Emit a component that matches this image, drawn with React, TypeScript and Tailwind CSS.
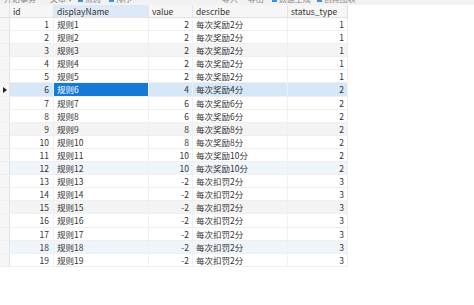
import React from "react";

type Row = { id: number; name: string; value: number; desc: string; st: number };

const rows: Row[] = [
  { id: 1, name: "规则1", value: 2, desc: "每次奖励2分", st: 1 },
  { id: 2, name: "规则2", value: 2, desc: "每次奖励2分", st: 1 },
  { id: 3, name: "规则3", value: 2, desc: "每次奖励2分", st: 1 },
  { id: 4, name: "规则4", value: 2, desc: "每次奖励2分", st: 1 },
  { id: 5, name: "规则5", value: 2, desc: "每次奖励2分", st: 1 },
  { id: 6, name: "规则6", value: 4, desc: "每次奖励4分", st: 2 },
  { id: 7, name: "规则7", value: 6, desc: "每次奖励6分", st: 2 },
  { id: 8, name: "规则8", value: 6, desc: "每次奖励6分", st: 2 },
  { id: 9, name: "规则9", value: 8, desc: "每次奖励8分", st: 2 },
  { id: 10, name: "规则10", value: 8, desc: "每次奖励8分", st: 2 },
  { id: 11, name: "规则11", value: 10, desc: "每次奖励10分", st: 2 },
  { id: 12, name: "规则12", value: 10, desc: "每次奖励10分", st: 2 },
  { id: 13, name: "规则13", value: -2, desc: "每次扣罚2分", st: 3 },
  { id: 14, name: "规则14", value: -2, desc: "每次扣罚2分", st: 3 },
  { id: 15, name: "规则15", value: -2, desc: "每次扣罚2分", st: 3 },
  { id: 16, name: "规则16", value: -2, desc: "每次扣罚2分", st: 3 },
  { id: 17, name: "规则17", value: -2, desc: "每次扣罚2分", st: 3 },
  { id: 18, name: "规则18", value: -2, desc: "每次扣罚2分", st: 3 },
  { id: 19, name: "规则19", value: -2, desc: "每次扣罚2分", st: 3 },
];

function rowBg(id: number) {
  if (id === 6) return "bg-[#d6e7f8]";
  if (id === 12 || id === 18) return "bg-[#eff5fb]";
  if (id % 3 === 0) return "bg-[#f4f4f4]";
  return "bg-white";
}

export default function App() {
  return (
    <div
      className="w-[474px] h-[305px] bg-white overflow-hidden text-[#333] text-[8.5px]"
      style={{ fontFamily: '"Noto Sans CJK SC", "Noto Sans", sans-serif' }}
    >
      {/* cut-off toolbar */}
      <div className="h-[5px] bg-[#f2f2f2] overflow-hidden">
        <div className="flex items-center h-[10px] -mt-[6px] text-[#8a8a8a] text-[8px] leading-[10px] whitespace-nowrap">
          <span className="ml-[4px]">开始事务</span>
          <span className="ml-[14px]">文本 ▾</span>
          <span className="ml-[6px] inline-block w-[5px] h-[5px] bg-[#3a8ee6]" />
          <span className="ml-[2px]">筛选</span>
          <span className="ml-[8px] inline-block w-[5px] h-[5px] bg-[#3a8ee6]" />
          <span className="ml-[2px]">排序</span>
          <span className="ml-[90px]">导入</span>
          <span className="ml-[10px]">导出</span>
          <span className="ml-[8px] inline-block w-[5px] h-[5px] bg-[#3a8ee6]" />
          <span className="ml-[2px]">数据生成</span>
          <span className="ml-[6px] inline-block w-[5px] h-[5px] bg-[#3a8ee6]" />
          <span className="ml-[2px]">创建图表</span>
        </div>
      </div>

      <div className="w-[348px]">
        {/* header */}
        <div className="flex h-[13px] leading-[13px] bg-[#f6f6f6] border-b border-[#e2e2e2]">
          <div className="w-[10px] border-r border-[#e4e4e4]" />
          <div className="w-[44px] pl-[3px] border-r border-[#e4e4e4]">id</div>
          <div className="w-[95px] pl-[3px] bg-[#dde9f6] border-r border-[#e4e4e4]">displayName</div>
          <div className="w-[44px] pl-[3px] border-r border-[#e4e4e4]">value</div>
          <div className="w-[95px] pl-[3px] border-r border-[#e4e4e4]">describe</div>
          <div className="w-[60px] pl-[3px] border-r border-[#e4e4e4]">status_type</div>
        </div>
        {rows.map((r) => (
          <div
            key={r.id}
            className={`flex h-[13.1px] leading-[12px] border-b border-[#efefef] ${rowBg(r.id)}`}
          >
            <div className="w-[10px] border-r border-[#e2e2e2] bg-[#f6f6f6] flex items-center justify-center">
              {r.id === 6 ? (
                <svg width="4" height="6" viewBox="0 0 4 6">
                  <path d="M0 0 L4 3 L0 6 Z" fill="#222" />
                </svg>
              ) : null}
            </div>
            <div className="w-[44px] pr-[4px] text-right border-r border-[#f0f0f0]">{r.id}</div>
            <div
              className={`w-[95px] pl-[3px] border-r border-[#f0f0f0] ${
                r.id === 6 ? "bg-[#1679d3] text-white" : ""
              }`}
            >
              {r.name}
            </div>
            <div className="w-[44px] pr-[3px] text-right border-r border-[#f0f0f0]">{r.value}</div>
            <div className="w-[95px] pl-[3px] border-r border-[#f0f0f0] whitespace-nowrap overflow-hidden">{r.desc}</div>
            <div className="w-[60px] pr-[3px] text-right border-r border-[#f0f0f0]">{r.st}</div>
          </div>
        ))}
      </div>
    </div>
  );
}
